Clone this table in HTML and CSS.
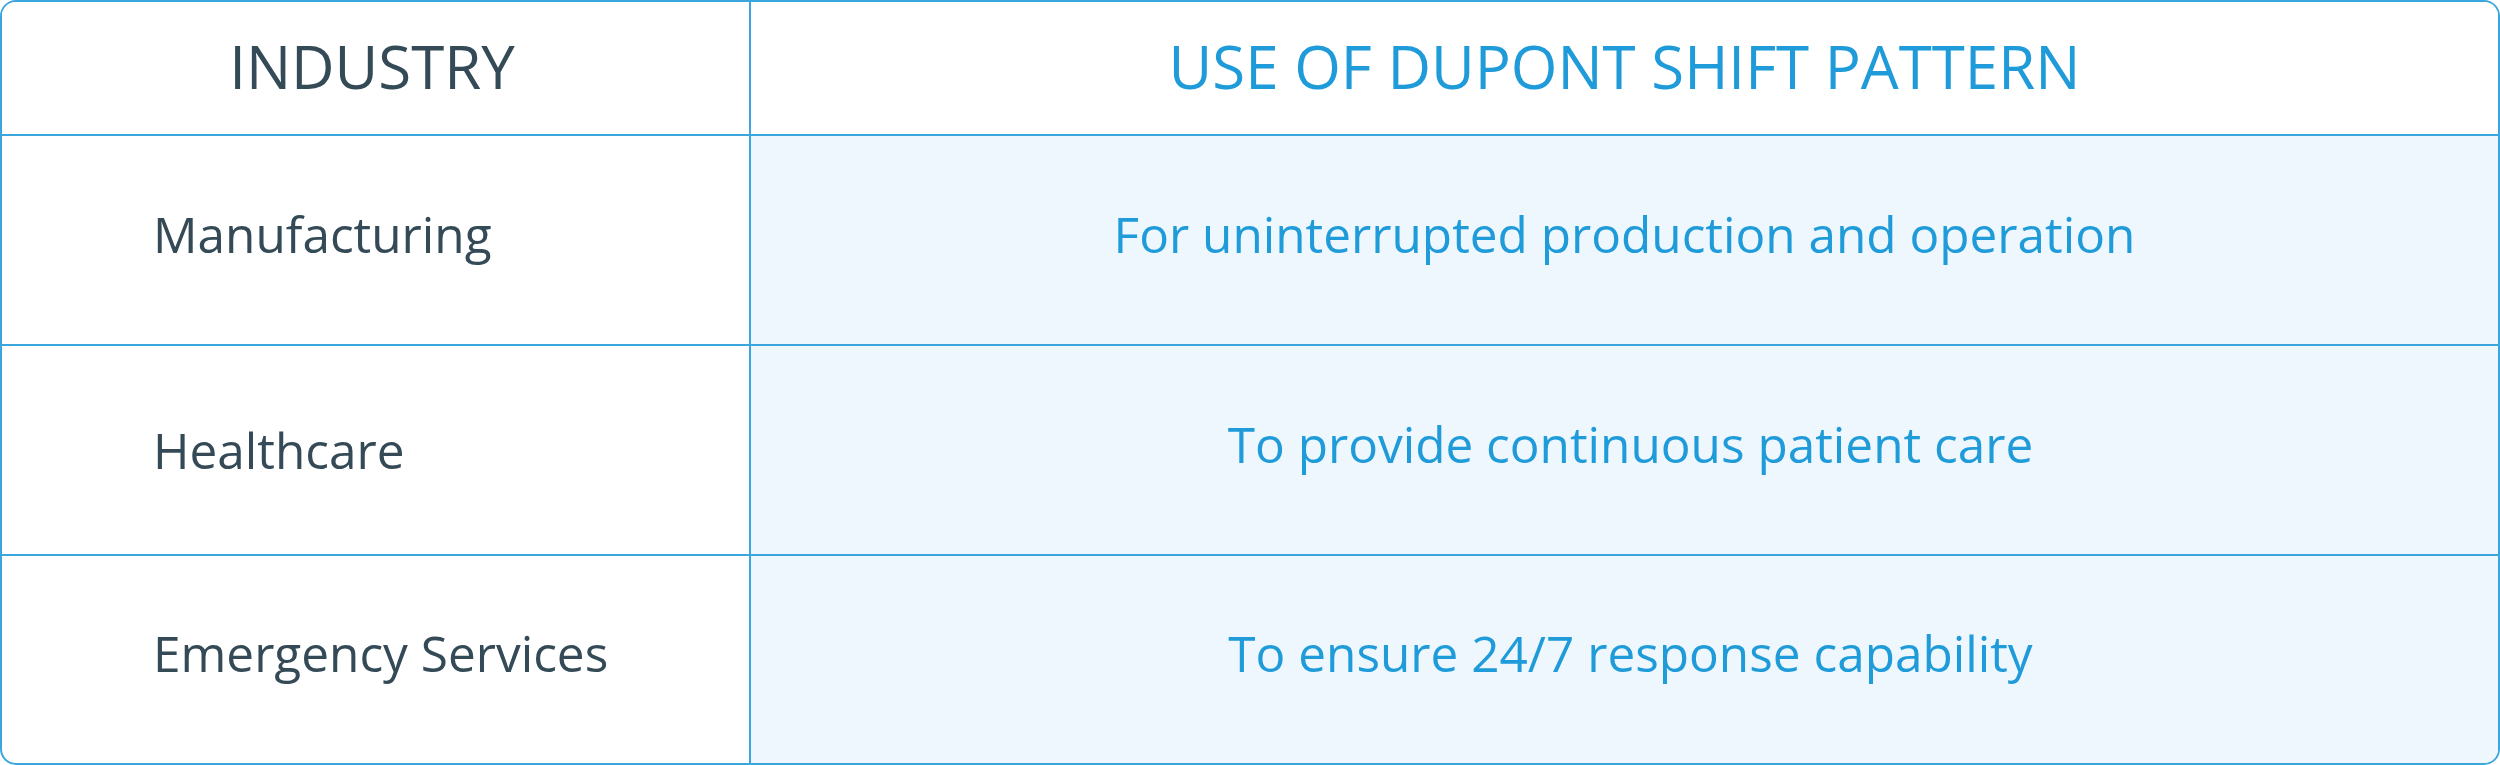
FILE: index.html
```html
<!DOCTYPE html>
<html lang="en">
<head>
<meta charset="utf-8">
<title>DuPont Shift Pattern by Industry</title>
<link rel="stylesheet" href="styles.css">
</head>
<body>
<div class="table">
  <div class="cell cell--head cell--industry">INDUSTRY</div>
  <div class="cell cell--head cell--use">USE OF DUPONT SHIFT PATTERN</div>

  <div class="cell cell--industry">Manufacturing</div>
  <div class="cell cell--use">For uninterrupted production and operation</div>

  <div class="cell cell--industry cell--centered">Healthcare</div>
  <div class="cell cell--use cell--nudge">To provide continuous patient care</div>

  <div class="cell cell--industry cell--last">Emergency Services</div>
  <div class="cell cell--use cell--nudge cell--last">To ensure 24/7 response capability</div>
</div>
</body>
</html>
```
FILE: styles.css
```css
html, body {
  margin: 0;
  padding: 0;
  background: #ffffff;
}

.table {
  width: 2500px;
  height: 765px;
  box-sizing: border-box;
  border: 2px solid #3aa6dd;
  border-radius: 16px;
  overflow: hidden;
  display: grid;
  grid-template-columns: 749px 1fr;
  grid-template-rows: 134px 210px 210px 1fr;
  font-family: "Open Sans", "Noto Sans", sans-serif;
  font-weight: 400;
}

.cell {
  box-sizing: border-box;
  display: flex;
  align-items: center;
  border-bottom: 2px solid #3aa6dd;
  font-size: 49.5px;
  padding-bottom: 13px;
  line-height: normal;
}

.cell--industry {
  border-right: 2px solid #3aa6dd;
  color: #344a56;
  padding-left: 151px;
}

.cell--use {
  justify-content: center;
  color: #1f9bd9;
  background: #eef7fd;
}

.cell--nudge {
  padding-left: 12px;
}

.cell--head {
  font-size: 60px;
  padding-bottom: 4px;
  background: #ffffff;
}

.cell--head.cell--industry {
  justify-content: center;
  padding-left: 0;
  padding-right: 7px;
}

.cell--centered {
  padding-bottom: 0;
}

.cell--last {
  border-bottom: none;
}
```
